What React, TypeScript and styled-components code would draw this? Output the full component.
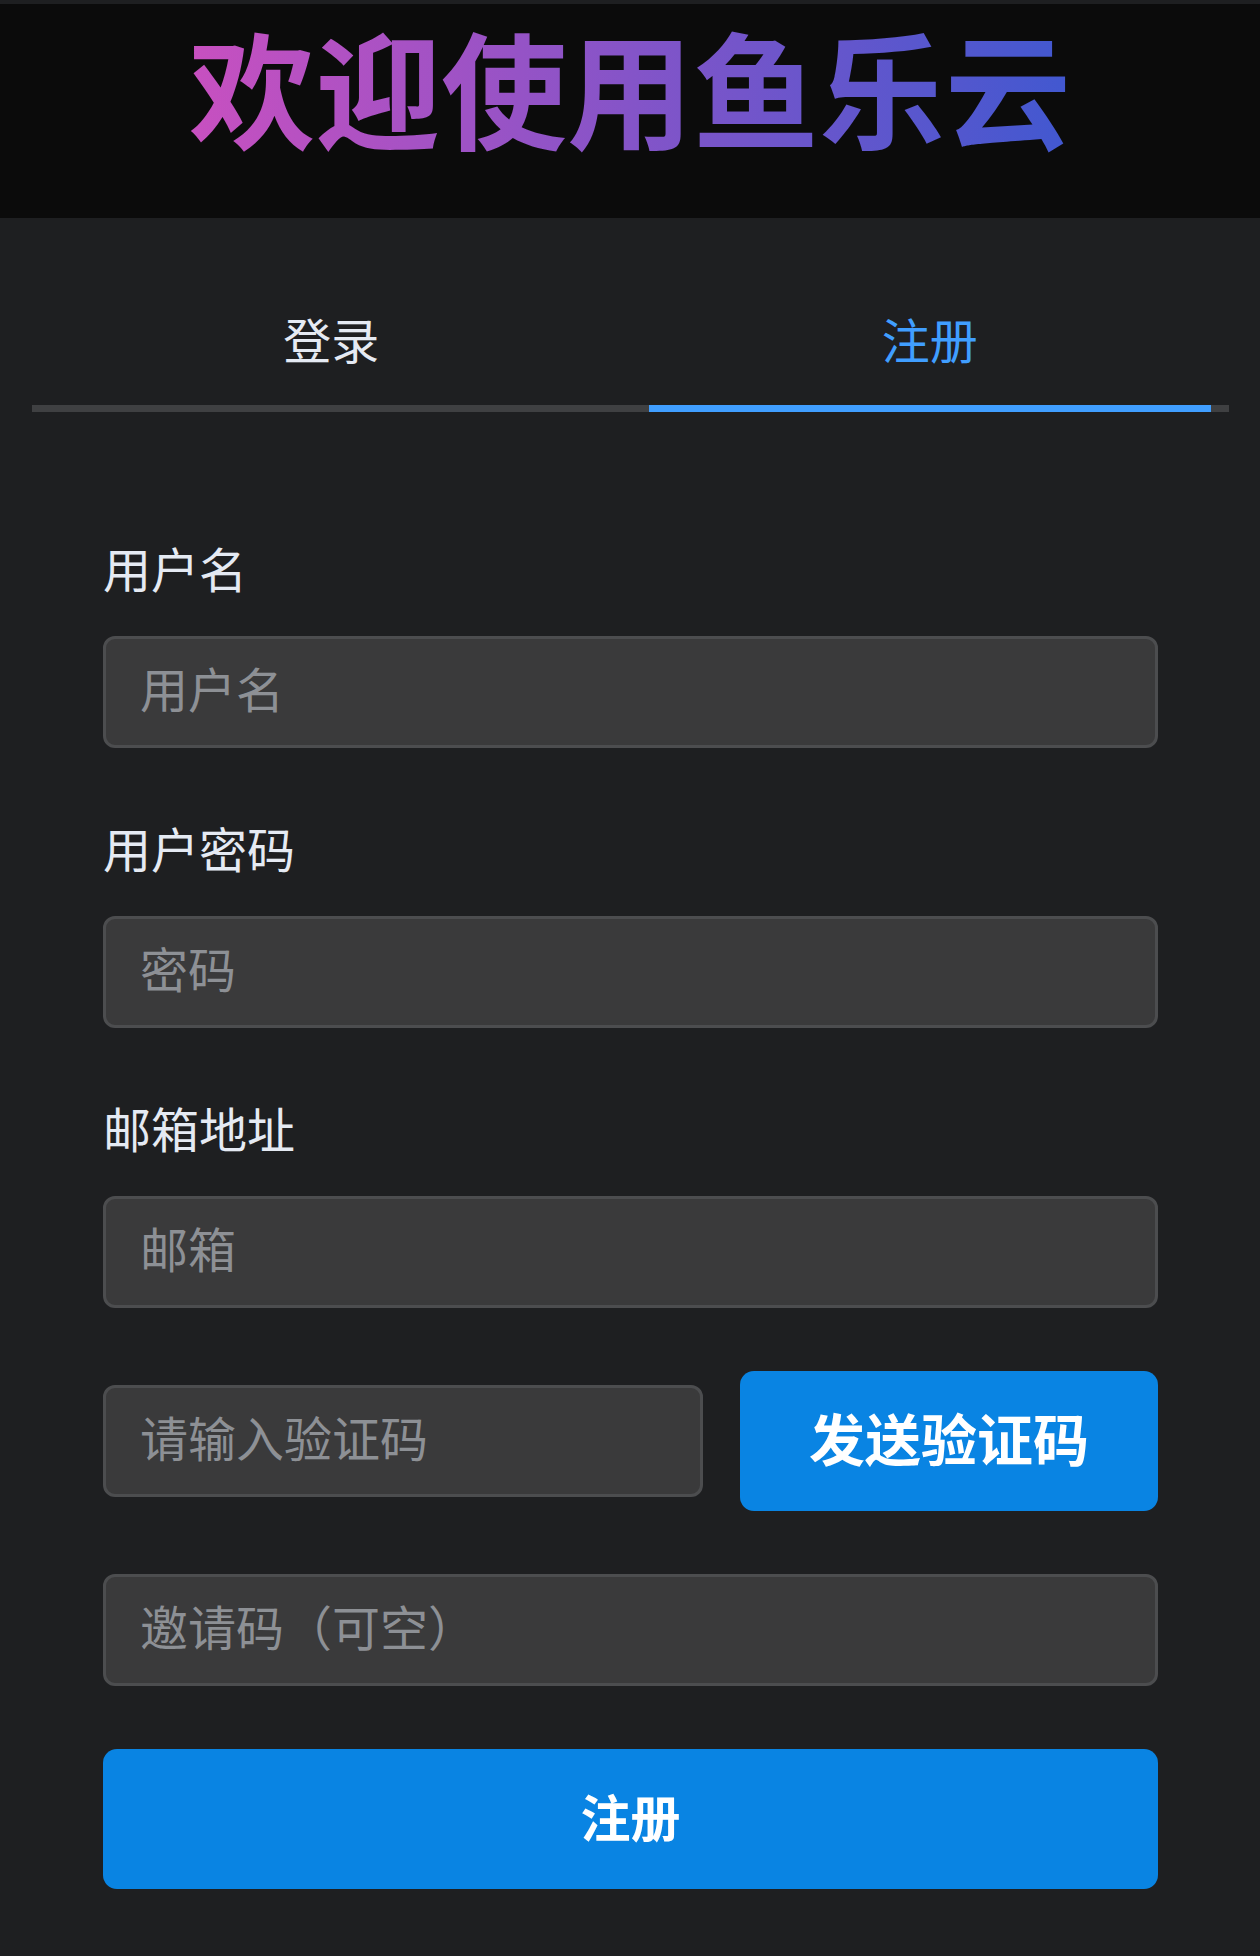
import { useState } from "react";
import styled, { createGlobalStyle } from "styled-components";

const GlobalStyle = createGlobalStyle`
  body {
    margin: 0;
    background: #1e1f21;
    font-family: "Noto Sans CJK SC", "Noto Sans", sans-serif;
  }
`;

const Page = styled.div`
  min-height: 100vh;
  padding-top: 4px;
  box-sizing: border-box;
`;

const Header = styled.header`
  height: 214px;
  box-sizing: border-box;
  padding-top: 1px;
  background: #0b0b0b;
  display: flex;
  justify-content: center;
  align-items: flex-start;
`;

const Title = styled.h1`
  margin: 0;
  font-size: 126px;
  line-height: 160px;
  font-weight: 700;
  color: #8655c8;
  background: linear-gradient(90deg, #c850c0 0%, #4158d0 100%);
  -webkit-background-clip: text;
  background-clip: text;
  -webkit-text-fill-color: transparent;
`;

const Tabs = styled.div`
  margin-top: 59px;
  padding: 0 31px 0 32px;
`;

const TabNav = styled.div`
  display: grid;
  grid-template-columns: 1fr 1fr;
  border-bottom: 7px solid #3f4042;
`;

const TabItem = styled.div<{ $active?: boolean }>`
  position: relative;
  height: 128px;
  line-height: 122px;
  text-align: center;
  font-size: 48px;
  color: ${(p) => (p.$active ? "#409eff" : "#e5eaf3")};
  cursor: pointer;

  &::after {
    content: "";
    display: ${(p) => (p.$active ? "block" : "none")};
    position: absolute;
    left: 18px;
    right: 18px;
    bottom: -7px;
    height: 7px;
    background: #409eff;
  }
`;

const Form = styled.form`
  padding: 119px 71px 0;
  display: flex;
  flex-direction: column;
  gap: 63px;
`;

const FormItem = styled.div`
  display: flex;
  flex-direction: column;
`;

const Label = styled.label`
  display: block;
  height: 72px;
  font-size: 48px;
  line-height: 72px;
  color: #e5eaf3;
  margin-bottom: 33px;
`;

const Input = styled.input`
  width: 100%;
  height: 112px;
  box-sizing: border-box;
  border: 3px solid #4c4d4f;
  border-radius: 12px;
  background: #3a3a3b;
  padding: 0 34px 10px;
  font-family: inherit;
  font-size: 48px;
  color: #e5eaf3;
  outline: none;

  &::placeholder {
    color: #8d9095;
  }
`;

const CodeRow = styled.div`
  display: grid;
  grid-template-columns: calc((100% + 37px) * 14 / 24 - 37px) 1fr;
  column-gap: 37px;
  align-items: center;
`;

const Button = styled.button<{ $size: number }>`
  height: 140px;
  padding: 0 0 9px;
  border: none;
  border-radius: 14px;
  background: #0984e3;
  color: #ffffff;
  font-family: inherit;
  font-weight: 700;
  font-size: ${(p) => p.$size}px;
  cursor: pointer;
`;

const App = () => {
  const [tab, setTab] = useState<"login" | "register">("register");

  return (
    <>
      <GlobalStyle />
      <Page>
        <Header>
          <Title>欢迎使用鱼乐云</Title>
        </Header>
        <Tabs>
          <TabNav>
            <TabItem $active={tab === "login"} onClick={() => setTab("login")}>
              登录
            </TabItem>
            <TabItem $active={tab === "register"} onClick={() => setTab("register")}>
              注册
            </TabItem>
          </TabNav>
          <Form onSubmit={(e) => e.preventDefault()}>
            <FormItem>
              <Label>用户名</Label>
              <Input placeholder="用户名" />
            </FormItem>
            <FormItem>
              <Label>用户密码</Label>
              <Input type="password" placeholder="密码" />
            </FormItem>
            <FormItem>
              <Label>邮箱地址</Label>
              <Input placeholder="邮箱" />
            </FormItem>
            <CodeRow>
              <Input placeholder="请输入验证码" />
              <Button type="button" $size={56}>
                发送验证码
              </Button>
            </CodeRow>
            <Input placeholder="邀请码（可空）" />
            <Button type="submit" $size={50}>
              注册
            </Button>
          </Form>
        </Tabs>
      </Page>
    </>
  );
};

export default App;
